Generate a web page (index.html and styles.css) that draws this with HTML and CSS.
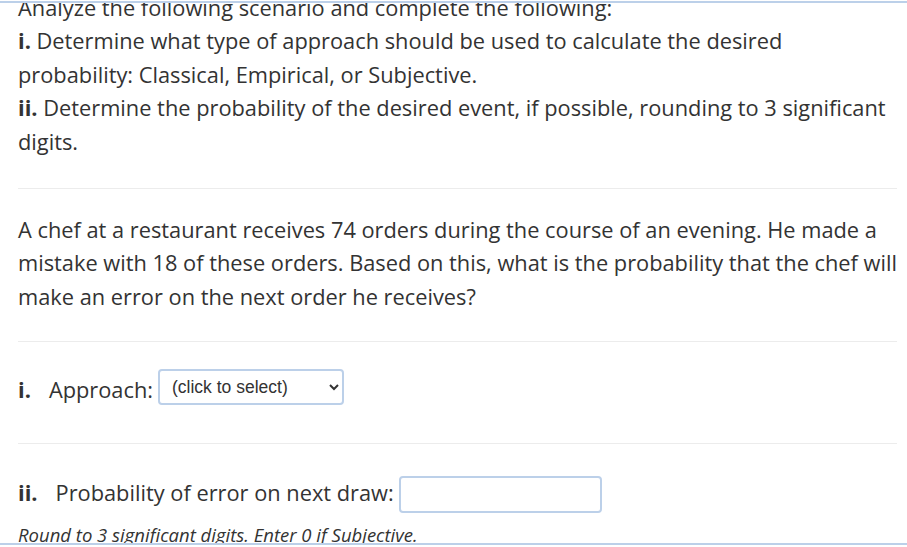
FILE: index.html
```html
<!DOCTYPE html>
<html lang="en">
<head>
<meta charset="utf-8">
<title>Probability approach</title>
<link rel="stylesheet" href="styles.css">
</head>
<body>
<div class="frame">
  <div class="content">
    <p class="intro">Analyze the following scenario and complete the following:<br>
      <b>i.</b> Determine what type of approach should be used to calculate the desired probability: Classical, Empirical, or Subjective.<br>
      <b>ii.</b> Determine the probability of the desired event, if possible, rounding to 3 significant digits.</p>
    <div class="sep sep-1"></div>
    <p class="scenario">A chef at a restaurant receives 74 orders during the course of an evening. He made a mistake with 18 of these orders. Based on this, what is the probability that the chef will make an error on the next order he receives?</p>
    <div class="sep sep-2"></div>
    <div class="row row-approach">
      <span class="num">i.</span>
      <span class="label">Approach:</span>
      <select class="pick">
        <option>(click to select)</option>
        <option>Classical</option>
        <option>Empirical</option>
        <option>Subjective</option>
      </select>
    </div>
    <div class="sep sep-3"></div>
    <div class="row row-prob">
      <span class="num">ii.</span>
      <span class="label">Probability of error on next draw:</span>
      <input class="answer" type="text">
    </div>
    <p class="hint">Round to 3 significant digits. Enter 0 if Subjective.</p>
  </div>
</div>
</body>
</html>
```

FILE: styles.css
```css
html, body {
  margin: 0;
  padding: 0;
  background: #ffffff;
}

body {
  font-family: "Open Sans", "Noto Sans", sans-serif;
  font-size: 21.8px;
  line-height: 33.6px;
  color: #333333;
}

.frame {
  box-sizing: border-box;
  margin-top: 1px;
  height: 544px;
  border-top: 2px solid #bcd0e9;
  border-bottom: 2px solid #bcd0e9;
  overflow: hidden;
}

.content {
  margin-top: -12.3px;
  padding: 0 10px 0 18px;
}

p {
  margin: 0;
}

b, .num {
  font-weight: 700;
}

.sep {
  height: 1px;
  background: #ececec;
}

.sep-1 {
  margin: 29.3px 0 23.7px;
}

.sep-2 {
  margin: 27.5px 0 27px;
}

.row {
  display: flex;
  align-items: flex-start;
}

.num {
  margin-right: 18px;
}

.label {
  margin-right: 5px;
}

.row-approach .num,
.row-approach .label {
  margin-top: 3.7px;
}

.pick {
  box-sizing: border-box;
  width: 186px;
  height: 36px;
  padding: 0 10px 0 8px;
  border: 2px solid #bcd0e9;
  border-radius: 4px;
  background: #ffffff;
  font-family: "Liberation Sans", Arial, sans-serif;
  font-size: 17.5px;
  color: #333333;
}

.sep-3 {
  margin: 36.7px 0 32px;
}

.answer {
  box-sizing: border-box;
  width: 203px;
  height: 37px;
  border: 2px solid #bcd0e9;
  border-radius: 4px;
  background: #ffffff;
  font-family: "Liberation Sans", Arial, sans-serif;
  font-size: 16px;
}

.hint {
  margin-top: 12.5px;
  font-size: 18.5px;
  line-height: 20px;
  font-style: italic;
}
```
